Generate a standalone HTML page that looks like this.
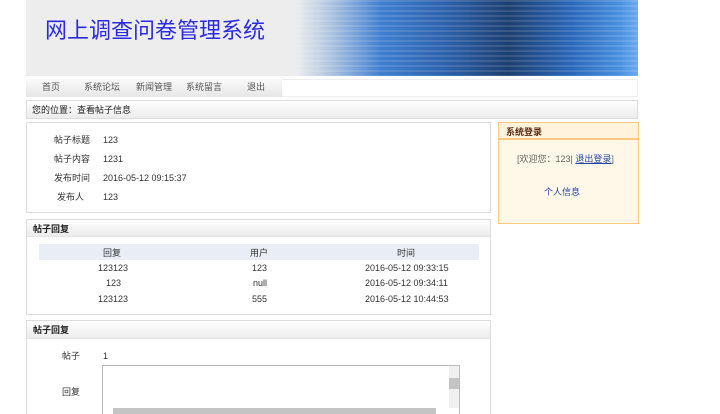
<!DOCTYPE html>
<html><head><meta charset="utf-8"><style>
*{margin:0;padding:0;box-sizing:border-box}
html,body{width:720px;height:414px;overflow:hidden}
body{background:#fff;font-family:"Liberation Sans","Noto Sans CJK SC",sans-serif;font-size:9px;line-height:10px;color:#333;position:relative}
.a{position:absolute;line-height:10px}
</style></head><body>
<div class="a" style="left:26px;top:0;width:612px;height:76px;background:#ededed;overflow:hidden">
 <div class="a" style="left:270px;top:0;width:342px;height:76px;background:linear-gradient(90deg,rgba(237,237,237,1) 0%,rgba(150,180,220,.7) 10%,#3f7fd0 25%,#2c5fa8 45%,#1d3f70 62%,#2a66b8 80%,#4b92e0 95%,#6aaaf0 100%)"></div>
 <div class="a" style="left:270px;top:0;width:342px;height:76px;background:repeating-linear-gradient(180deg,rgba(255,255,255,.12) 0 2px,rgba(0,0,0,0) 2px 5px)"></div>
 <div class="a" style="left:19px;top:16px;font-size:22px;line-height:26px;color:#2a2ae0;font-family:'WenQuanYi Zen Hei','Noto Sans CJK SC',sans-serif">网上调查问卷管理系统</div>
</div>
<div class="a" style="left:26px;top:79px;width:612px;height:18px;border:1px solid #eee;background:#fff"></div>
<div class="a" style="left:26px;top:79px;width:256px;height:18px;background:linear-gradient(#fafafa,#e6e6e6);color:#555">
 <span class="a" style="left:16px;top:3px">首页</span><span class="a" style="left:58px;top:3px">系统论坛</span><span class="a" style="left:110px;top:3px">新闻管理</span><span class="a" style="left:160px;top:3px">系统留言</span><span class="a" style="left:221px;top:3px">退出</span>
</div>
<div class="a" style="left:26px;top:100px;width:612px;height:19px;border:1px solid #ddd;background:linear-gradient(#fff,#ececec)"><span class="a" style="left:5px;top:4px;color:#222">您的位置：查看帖子信息</span></div>
<div class="a" style="left:26px;top:122px;width:465px;height:91px;border:1px solid #ddd">
 <span class="a" style="left:27px;top:12px">帖子标题</span><span class="a" style="left:76px;top:12px">123</span>
 <span class="a" style="left:27px;top:31px">帖子内容</span><span class="a" style="left:76px;top:31px">1231</span>
 <span class="a" style="left:27px;top:50px">发布时间</span><span class="a" style="left:76px;top:50px">2016-05-12 09:15:37</span>
 <span class="a" style="left:30px;top:69px">发布人</span><span class="a" style="left:76px;top:69px">123</span>
</div>
<div class="a" style="left:498px;top:122px;width:141px;height:102px;border:1px solid #fbc97e;background:#fff8e8">
 <div style="height:17px;border-bottom:2px solid #fbc97e;background:#fff3dc;font-weight:bold;color:#5a2a10;padding:4px 0 0 7px">系统登录</div>
 <span class="a" style="left:18px;top:31px;color:#666">[欢迎您：123| <span style="color:#2244aa;text-decoration:underline">退出登录</span>]</span>
 <span class="a" style="left:45px;top:64px;color:#2244aa">个人信息</span>
</div>
<div class="a" style="left:26px;top:219px;width:465px;height:96px;border:1px solid #ddd">
 <div style="height:17px;background:linear-gradient(#fff,#ececec);border-bottom:1px solid #e4e4e4;font-weight:bold;color:#222;padding:4px 0 0 6px">帖子回复</div>
 <div class="a" style="left:12px;top:24px;width:440px;height:16px;background:#e9eef5"></div>
 <span class="a" style="left:76px;top:28px">回复</span><span class="a" style="left:223px;top:28px">用户</span><span class="a" style="left:370px;top:28px">时间</span>
 <span class="a" style="left:71px;top:43px">123123</span><span class="a" style="left:225px;top:43px">123</span><span class="a" style="left:338px;top:43px">2016-05-12 09:33:15</span>
 <span class="a" style="left:79px;top:58px">123</span><span class="a" style="left:226px;top:58px">null</span><span class="a" style="left:338px;top:58px">2016-05-12 09:34:11</span>
 <span class="a" style="left:71px;top:74px">123123</span><span class="a" style="left:225px;top:74px">555</span><span class="a" style="left:338px;top:74px">2016-05-12 10:44:53</span>
</div>
<div class="a" style="left:26px;top:320px;width:465px;height:100px;border:1px solid #ddd">
 <div style="height:18px;background:linear-gradient(#fff,#ececec);border-bottom:1px solid #e4e4e4;font-weight:bold;color:#222;padding:4px 0 0 6px">帖子回复</div>
 <span class="a" style="left:35px;top:30px">帖子</span><span class="a" style="left:76px;top:30px">1</span>
 <span class="a" style="left:35px;top:66px">回复</span>
 <div class="a" style="left:75px;top:44px;width:358px;height:60px;border:1px solid #bbb;background:#fff">
  <div class="a" style="right:0;top:0;width:10px;height:42px;background:#f0f0f0"><div style="margin-top:12px;height:11px;background:#c4c4c4"></div></div>
  <div class="a" style="left:10px;top:42px;width:323px;height:7px;background:#c4c4c4"></div>
 </div>
</div>
</body></html>
